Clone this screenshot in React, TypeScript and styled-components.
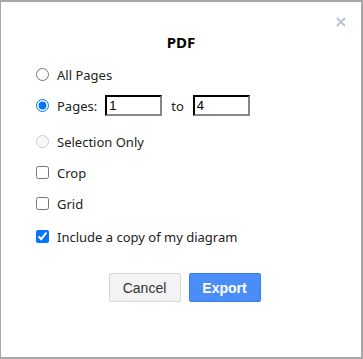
import styled, { createGlobalStyle } from 'styled-components';

const GlobalStyle = createGlobalStyle`
  html, body {
    margin: 0;
    padding: 0;
    background: #fff;
  }
`;

const Dialog = styled.div`
  position: relative;
  box-sizing: border-box;
  width: 363px;
  height: 359px;
  border: 1px solid #a8a8a8;
  border-width: 2px 2px 2px 1px;
  background: #fff;
  font-family: 'Noto Sans', 'Open Sans', sans-serif;
  font-size: 13px;
  color: #222;
`;

const CloseButton = styled.button`
  position: absolute;
  top: 14px;
  right: 14px;
  width: 12px;
  height: 12px;
  padding: 0;
  border: 0;
  background: none;
  display: flex;
  align-items: center;
  justify-content: center;
  cursor: pointer;
`;

const Title = styled.h2`
  margin: 0;
  padding-top: 30px;
  text-align: center;
  font-size: 15px;
  line-height: 20px;
  font-weight: 700;
  color: #000;
`;

const Options = styled.div`
  display: flex;
  flex-direction: column;
  padding: 7px 0 0 35px;
`;

const Row = styled.label<{ $after?: number; $disabled?: boolean }>`
  display: flex;
  align-items: center;
  height: 31px;
  margin-bottom: ${(p) => p.$after ?? 0}px;
  color: #222;

  input[type='radio'],
  input[type='checkbox'] {
    margin: 0 8px 0 0;
    width: 13px;
    height: 13px;
  }
`;

const PageInput = styled.input`
  box-sizing: border-box;
  width: 57px;
  height: 21px;
  border: 2px inset #767676;
  border-color: #333 #888 #888 #333;
  padding: 0 2px;
  font-family: 'Liberation Sans', Arial, sans-serif;
  font-size: 13px;
  color: #000;
  outline: none;
`;

const PagesLabel = styled.span`
  margin-right: 8px;
`;

const ToLabel = styled.span`
  margin: 0 9px;
`;

const Buttons = styled.div`
  display: flex;
  justify-content: center;
  gap: 8px;
  padding-left: 7px;
  margin-top: 21px;
`;

const Button = styled.button<{ $primary?: boolean }>`
  box-sizing: border-box;
  width: 72px;
  height: 29px;
  border-radius: 2px;
  border: 1px solid ${(p) => (p.$primary ? '#3a7fe8' : '#d6d6d6')};
  background: ${(p) => (p.$primary ? '#4a8df8' : '#f3f3f3')};
  color: ${(p) => (p.$primary ? '#fff' : '#333')};
  font-family: 'Liberation Sans', Arial, sans-serif;
  font-size: 14px;
  font-weight: ${(p) => (p.$primary ? 700 : 400)};
  cursor: pointer;
`;

export default function App() {
  return (
    <>
      <GlobalStyle />
      <Dialog>
        <CloseButton aria-label="Close">
          <svg width="10" height="10" viewBox="0 0 10 10">
            <path d="M1 1 L9 9 M9 1 L1 9" stroke="#b8c4d6" strokeWidth="2" />
          </svg>
        </CloseButton>
        <Title>PDF</Title>
        <Options>
          <Row>
            <input type="radio" name="pages" />
            All Pages
          </Row>
          <Row $after={5}>
            <input type="radio" name="pages" defaultChecked />
            <PagesLabel>Pages:</PagesLabel>
            <PageInput defaultValue="1" />
            <ToLabel>to</ToLabel>
            <PageInput defaultValue="4" />
          </Row>
          <Row $disabled>
            <input type="radio" name="pages" disabled />
            Selection Only
          </Row>
          <Row>
            <input type="checkbox" />
            Crop
          </Row>
          <Row $after={2}>
            <input type="checkbox" />
            Grid
          </Row>
          <Row>
            <input type="checkbox" defaultChecked />
            Include a copy of my diagram
          </Row>
        </Options>
        <Buttons>
          <Button>Cancel</Button>
          <Button $primary>Export</Button>
        </Buttons>
      </Dialog>
    </>
  );
}
